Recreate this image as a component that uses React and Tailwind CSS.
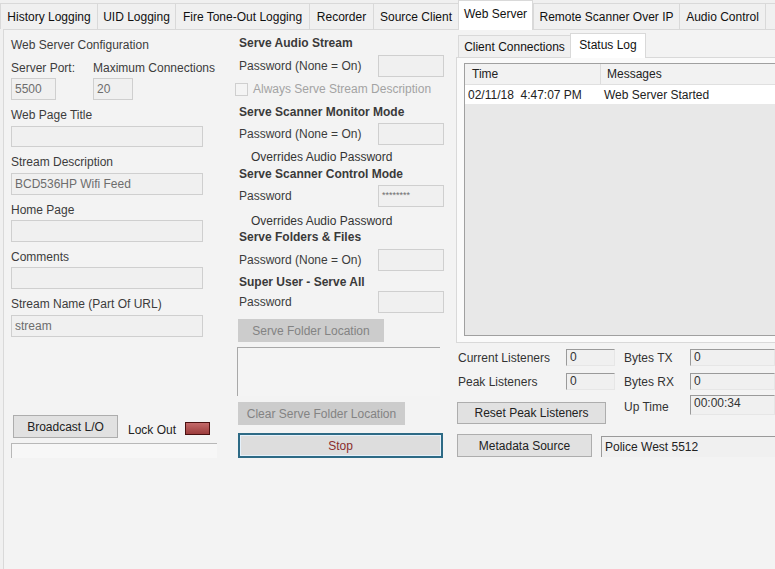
import React from 'react';

const tabs = [
    { label: 'History Logging', w: 'w-[97px]' },
    { label: 'UID Logging', w: 'w-[78px]' },
    { label: 'Fire Tone-Out Logging', w: 'w-[134px]' },
    { label: 'Recorder', w: 'w-[64px]' },
    { label: 'Source Client', w: 'w-[85px]' },
    { label: 'Web Server', w: 'w-[81px]', active: true },
    { label: 'Remote Scanner Over IP', w: 'w-[146px]' },
    { label: 'Audio Control', w: 'w-[86px]' },
    { label: '', w: 'w-[10px]' },
];

// flat grey text box like the disabled WinForms fields
const Box = ({ className = '', children }) => (
    <div className={`border border-[#cfcfcf] bg-[#f0f0f0] text-[#6d6d6d] px-[3px] flex items-center overflow-hidden whitespace-nowrap ${className}`}>
        {children}
    </div>
);

// sunken read-out box (top/left dark edge)
const Sunk = ({ className = '', children }) => (
    <div className={`border-t border-l border-[#9a9a9a] border-r border-b border-r-[#e6e6e6] border-b-[#e6e6e6] bg-[#f0f0f0] text-[#333] pl-[3px] flex items-start leading-[15px] overflow-hidden whitespace-nowrap ${className}`}>
        {children}
    </div>
);

const Btn = ({ className = '', children, disabled }) => (
    <div
        className={
            disabled
                ? `bg-[#cccccc] text-[#838383] flex items-center justify-center ${className}`
                : `bg-[#e1e1e1] border border-[#adadad] text-[#222] flex items-center justify-center ${className}`
        }
    >
        {children}
    </div>
);

const Label = ({ className = '', children }) => (
    <div className={`leading-[15px] h-[15px] text-[#3c3c3c] whitespace-nowrap ${className}`}>{children}</div>
);

const Head = ({ className = '', children }) => (
    <div className={`leading-[15px] h-[15px] font-bold text-[#3a3a3a] whitespace-nowrap pl-[4px] ${className}`}>{children}</div>
);

const PwRow = ({ label, value, className = '' }) => (
    <div className={`flex items-center justify-between h-[22px] w-[209px] ${className}`}>
        <span className="pl-[4px] text-[#3c3c3c]">{label}</span>
        <Box className="w-[66px] h-[22px] text-[9px] tracking-[0px]">{value}</Box>
    </div>
);

export default function App() {
    return (
        <div
            className="w-[775px] h-[569px] bg-[#f0f0f0] overflow-hidden text-[12px]"
            style={{ fontFamily: '"Liberation Sans", Arial, sans-serif' }}
        >
            {/* main tab strip */}
            <div className="flex items-end h-[29px]">
                {tabs.map((t, i) =>
                    t.active ? (
                        <div
                            key={i}
                            className={`${t.w} h-[30px] -mb-[1px] bg-white border border-b-0 border-[#d9d9d9] flex items-center justify-center pb-[4px] text-[#111] relative z-10`}
                        >
                            {t.label}
                        </div>
                    ) : (
                        <div
                            key={i}
                            className={`${t.w} h-[26px] bg-[#f0f0f0] border border-r-0 border-b-0 border-[#d9d9d9] flex items-center justify-center text-[#111] shrink-0`}
                        >
                            {t.label}
                        </div>
                    )
                )}
            </div>

            {/* tab page */}
            <div className="ml-[3px] h-[540px] border-t border-l border-[#d9d9d9] bg-[#f3f3f3] flex">
                {/* left column */}
                <div className="w-[228px] pl-[7px] flex flex-col">
                    <Label className="mt-[8px]">Web Server Configuration</Label>
                    <div className="flex mt-[8px]">
                        <div className="w-[82px] flex flex-col">
                            <Label>Server Port:</Label>
                            <Box className="mt-[2px] w-[45px] h-[22px]">5500</Box>
                        </div>
                        <div className="flex flex-col">
                            <Label>Maximum Connections</Label>
                            <Box className="mt-[2px] w-[40px] h-[22px]">20</Box>
                        </div>
                    </div>
                    <Label className="mt-[8px]">Web Page Title</Label>
                    <Box className="mt-[3px] w-[192px] h-[21px]" />
                    <Label className="mt-[8px]">Stream Description</Label>
                    <Box className="mt-[3px] w-[192px] h-[22px]">BCD536HP Wifi Feed</Box>
                    <Label className="mt-[8px]">Home Page</Label>
                    <Box className="mt-[2px] w-[192px] h-[22px]" />
                    <Label className="mt-[8px]">Comments</Label>
                    <Box className="mt-[2px] w-[192px] h-[22px]" />
                    <Label className="mt-[8px]">Stream Name (Part Of URL)</Label>
                    <Box className="mt-[3px] w-[192px] h-[22px]">stream</Box>

                    <div className="flex items-center mt-[78px] h-[23px]">
                        <Btn className="ml-[2px] w-[105px] h-[23px]">Broadcast L/O</Btn>
                        <span className="ml-[10px] mt-[6px] text-[#222]">Lock Out</span>
                        <div className="ml-[9px] mt-[4px] w-[25px] h-[13px] border border-[#4a1010] bg-gradient-to-b from-[#c46a6a] to-[#9c3c3c]" />
                    </div>
                    <div className="mt-[5px] w-[206px] h-[15px] border-t border-l border-[#b8b8b8] bg-[#f7f7f7]" />
                </div>

                {/* middle column */}
                <div className="w-[218px] pl-[3px] flex flex-col">
                    <Head className="mt-[6px]">Serve Audio Stream</Head>
                    <PwRow className="mt-[4px]" label="Password (None = On)" />
                    <div className="mt-[4px] h-[16px] flex items-center">
                        <div className="w-[13px] h-[13px] border border-[#cfcfcf] bg-[#f4f4f4]" />
                        <span className="ml-[5px] text-[#a3a3a3]">Always Serve Stream Description</span>
                    </div>
                    <Head className="mt-[8px]">Serve Scanner Monitor Mode</Head>
                    <PwRow className="mt-[3px]" label="Password (None = On)" />
                    <Label className="mt-[5px] pl-[16px] text-[#333]">Overrides Audio Password</Label>
                    <Head className="mt-[2px]">Serve Scanner Control Mode</Head>
                    <PwRow className="mt-[3px]" label="Password" value="********" />
                    <Label className="mt-[7px] pl-[16px] text-[#333]">Overrides Audio Password</Label>
                    <Head className="mt-[1px]">Serve Folders &amp; Files</Head>
                    <PwRow className="mt-[4px]" label="Password (None = On)" />
                    <Head className="mt-[4px]">Super User - Serve All</Head>
                    <PwRow className="mt-[1px]" label="Password" />

                    <Btn disabled className="mt-[6px] ml-[3px] w-[146px] h-[23px]">Serve Folder Location</Btn>
                    <div className="mt-[5px] ml-[2px] w-[203px] h-[49px] border-t border-l border-[#a8a8a8] bg-[#f4f4f4]" />
                    <Btn disabled className="mt-[6px] ml-[3px] w-[167px] h-[23px]">Clear Serve Folder Location</Btn>
                    <div className="mt-[8px] ml-[3px] w-[205px] h-[25px] border-2 border-[#2d6a85] bg-[#e5f1fb] p-[1px]">
                        <div className="w-full h-full bg-[#dddddd] flex items-center justify-center text-[#8a2e2e]">Stop</div>
                    </div>
                </div>

                {/* right column */}
                <div className="flex-1 pl-[6px] flex flex-col">
                    {/* inner tabs */}
                    <div className="mt-[3px] h-[24px] flex items-end">
                        <div className="ml-[2px] w-[112px] h-[22px] bg-[#f0f0f0] border border-r-0 border-b-0 border-[#d9d9d9] flex items-center justify-center text-[#111]">
                            Client Connections
                        </div>
                        <div className="w-[76px] h-[25px] -mb-[1px] bg-white border border-b-0 border-[#d9d9d9] flex items-center justify-center pb-[2px] text-[#111] relative z-10">
                            Status Log
                        </div>
                    </div>
                    <div className="h-[286px] border border-r-0 border-[#d9d9d9] bg-[#fafafa] pl-[7px] pt-[5px]">
                        <div className="h-[273px] border-t border-l border-b border-[#a0a0a0] bg-[#e8e8e8] flex flex-col">
                            <div className="h-[21px] bg-[#f2f2f2] border-b border-[#e0e0e0] flex items-center text-[#222]">
                                <div className="w-[136px] h-full pl-[7px] flex items-center border-r border-[#dcdcdc]">Time</div>
                                <div className="pl-[6px]">Messages</div>
                            </div>
                            <div className="h-[19px] bg-white flex items-center text-[#222]">
                                <div className="w-[136px] pl-[3px] whitespace-pre">02/11/18  4:47:07 PM</div>
                                <div className="pl-[3px]">Web Server Started</div>
                            </div>
                        </div>
                    </div>

                    {/* listener counters */}
                    <div className="mt-[6px] h-[17px] flex items-center">
                        <span className="w-[110px] pl-[2px] text-[#333]">Current Listeners</span>
                        <Sunk className="w-[49px] h-[17px]">0</Sunk>
                        <span className="ml-[9px] w-[66px] text-[#333]">Bytes TX</span>
                        <Sunk className="flex-1 h-[17px]">0</Sunk>
                    </div>
                    <div className="mt-[7px] h-[17px] flex items-center">
                        <span className="w-[110px] pl-[2px] text-[#333]">Peak Listeners</span>
                        <Sunk className="w-[49px] h-[17px]">0</Sunk>
                        <span className="ml-[9px] w-[66px] text-[#333]">Bytes RX</span>
                        <Sunk className="flex-1 h-[17px]">0</Sunk>
                    </div>
                    <div className="mt-[5px] flex items-start">
                        <Btn className="mt-[7px] ml-[1px] w-[149px] h-[22px]">Reset Peak Listeners</Btn>
                        <span className="ml-[18px] mt-[5px] w-[66px] text-[#333] leading-[15px]">Up Time</span>
                        <Sunk className="flex-1 h-[20px]">00:00:34</Sunk>
                    </div>
                    <div className="mt-[10px] flex items-start">
                        <Btn className="ml-[1px] w-[135px] h-[23px]">Metadata Source</Btn>
                        <div className="ml-[9px] mt-[2px] flex-1 h-[21px] border-t border-l border-[#9a9a9a] bg-[#f0f0f0] text-[#222] pl-[3px] flex items-center whitespace-nowrap">
                            Police West 5512
                        </div>
                    </div>
                </div>
            </div>
        </div>
    );
}
